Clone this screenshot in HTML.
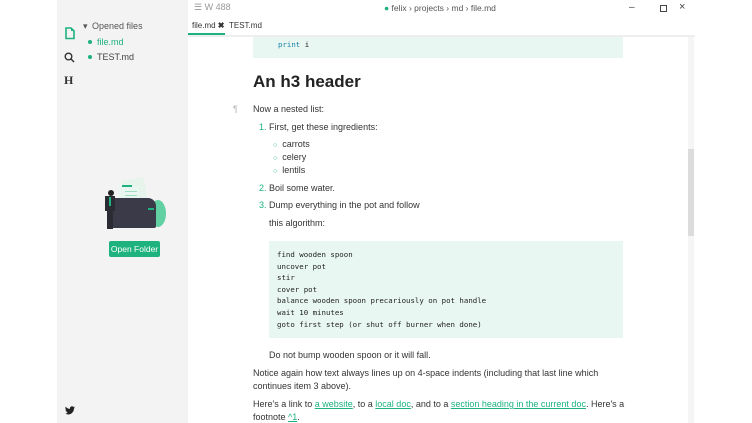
<!DOCTYPE html>
<html><head><meta charset="utf-8"><style>
*{margin:0;padding:0;box-sizing:border-box}
body{width:752px;height:423px;background:#fff;position:relative;overflow:hidden;font-family:"Liberation Sans",sans-serif;color:#333}
.a{position:absolute}
#side{left:57px;top:0;width:131px;height:423px;background:#f3f3f3}
#main{left:188px;top:0;width:507px;height:423px;background:#fff}
.t{font-size:9px;white-space:nowrap}
.p{position:absolute;font-size:9px;line-height:12px;white-space:nowrap;color:#333}
.g{color:#1db27e}
.lnk{color:#1db27e;text-decoration:underline}
.mono{font-family:"DejaVu Sans Mono","Liberation Mono",monospace;font-size:7.4px;line-height:11.6px;color:#222;white-space:pre}
</style></head><body>
<div id="side" class="a">
  <svg class="a" style="left:7px;top:27px" width="12" height="13" viewBox="0 0 12 13"><path d="M2 1h5l3 3v7.5H2z" fill="none" stroke="#1db27e" stroke-width="1.6"/><path d="M7 1v3h3" fill="#1db27e"/></svg>
  <svg class="a" style="left:7px;top:52px" width="11" height="11" viewBox="0 0 11 11"><circle cx="4.5" cy="4.5" r="3.3" fill="none" stroke="#333" stroke-width="1.4"/><path d="M7 7l3 3" stroke="#333" stroke-width="1.5"/></svg>
  <div class="a" style="left:7px;top:73px;font-family:'Liberation Serif',serif;font-weight:bold;font-size:12px;color:#333">H</div>
  <div class="a t" style="left:26px;top:21px;color:#555">▾ <span style="margin-left:2px">Opened files</span></div>
  <div class="a" style="left:31px;top:40px;width:4px;height:4px;border-radius:50%;background:#1db27e"></div>
  <div class="a t g" style="left:40px;top:37px">file.md</div>
  <div class="a" style="left:31px;top:55px;width:4px;height:4px;border-radius:50%;background:#1db27e"></div>
  <div class="a t" style="left:40px;top:52px;color:#444">TEST.md</div>
  <div class="a" style="left:67px;top:179px;width:22px;height:26px;background:#e6f4ec;transform:rotate(-10deg)"></div>
  <div class="a" style="left:62px;top:186px;width:20px;height:20px;background:#eaf6f0"></div>
  <div class="a" style="left:65px;top:185px;width:10px;height:1.5px;background:#1db27e"></div>
  <div class="a" style="left:68px;top:191px;width:12px;height:1px;background:#9fdcbf"></div>
  <div class="a" style="left:68px;top:195px;width:12px;height:1px;background:#9fdcbf"></div>
  <div class="a" style="left:93px;top:200px;width:16px;height:27px;border-radius:50%;background:#3cc78d;opacity:.8"></div>
  <div class="a" style="left:55px;top:198px;width:44px;height:30px;background:#3a3a48;border-radius:3px 8px 2px 2px"></div>
  <div class="a" style="left:91px;top:208px;width:6px;height:2px;background:#1db27e"></div>
  <div class="a" style="left:51px;top:190px;width:6px;height:6px;border-radius:50%;background:#222"></div>
  <div class="a" style="left:48px;top:196px;width:10px;height:15px;background:#2b2b33"></div>
  <div class="a" style="left:52px;top:197px;width:2px;height:9px;background:#1db27e"></div>
  <div class="a" style="left:50px;top:210px;width:6px;height:19px;background:#2b2b33"></div>
  <div class="a" style="left:52px;top:241px;width:51px;height:16px;background:#1db27e;border-radius:2px;color:#fff;font-size:8.5px;text-align:center;line-height:16px">Open Folder</div>
  <svg class="a" style="left:8px;top:406px" width="10" height="9" viewBox="0 0 24 20"><path d="M24 2.4a10 10 0 0 1-2.8.8A5 5 0 0 0 23.3.4a10 10 0 0 1-3.1 1.2A4.9 4.9 0 0 0 11.8 6 14 14 0 0 1 1.7.9a4.9 4.9 0 0 0 1.5 6.6A4.9 4.9 0 0 1 1 6.9a4.9 4.9 0 0 0 3.9 4.8 5 5 0 0 1-2.2.1 4.9 4.9 0 0 0 4.6 3.4A9.9 9.9 0 0 1 0 17.3 14 14 0 0 0 7.5 19.5c9 0 14-7.5 14-14v-.6A10 10 0 0 0 24 2.4z" fill="#222"/></svg>
</div>
<div id="main" class="a">
  <div class="a t" style="left:6px;top:2px;color:#999;font-size:9px">☰ W 488</div>
  <div class="a t" style="left:196px;top:3px;color:#555;font-size:8.5px"><span class="g">●</span> felix › projects › md › file.md</div>
  <div class="a t" style="left:441px;top:2px;color:#444;font-size:10px">–</div>
  <div class="a" style="left:472px;top:5px;width:7px;height:7px;border:1px solid #444"></div>
  <div class="a t" style="left:491px;top:1px;color:#444;font-size:11px">×</div>
  <div class="a t" style="left:4px;top:21px;color:#333;font-size:8px">file.md <b>✖</b></div>
  <div class="a" style="left:0;top:33px;width:37px;height:2px;background:#1db27e"></div>
  <div class="a t" style="left:41px;top:21px;color:#333;font-size:8px">TEST.md</div>
  <div class="a" style="left:65px;top:36px;width:370px;height:22px;background:#e8f7f1"></div>
  <div class="a" style="left:0;top:35px;width:507px;height:2px;background:#eee"></div>
  <div class="a mono" style="left:90px;top:39px;color:#1a7fa8">print <span style="color:#222">i</span></div>
  <div class="a" style="left:65px;top:72px;font-size:17px;font-weight:bold;color:#222">An h3 header</div>
  <div class="p" style="left:45px;top:103px;color:#bbb">¶</div>
  <div class="p" style="left:65px;top:103px">Now a nested list:</div>
  <div class="p" style="left:71px;top:121px"><span class="g">1.</span> First, get these ingredients:</div>
  <div class="p" style="left:85px;top:138px"><span class="g" style="font-size:7px">○</span>&nbsp; carrots</div>
  <div class="p" style="left:85px;top:151px"><span class="g" style="font-size:7px">○</span>&nbsp; celery</div>
  <div class="p" style="left:85px;top:164px"><span class="g" style="font-size:7px">○</span>&nbsp; lentils</div>
  <div class="p" style="left:71px;top:182px"><span class="g">2.</span> Boil some water.</div>
  <div class="p" style="left:71px;top:199px"><span class="g">3.</span> Dump everything in the pot and follow</div>
  <div class="p" style="left:81px;top:217px">this algorithm:</div>
  <div class="a" style="left:81px;top:241px;width:354px;height:97px;background:#e8f7f1"></div>
  <div class="a mono" style="left:89px;top:249px">find wooden spoon
uncover pot
stir
cover pot
balance wooden spoon precariously on pot handle
wait 10 minutes
goto first step (or shut off burner when done)</div>
  <div class="p" style="left:81px;top:349px">Do not bump wooden spoon or it will fall.</div>
  <div class="p" style="left:65px;top:367px">Notice again how text always lines up on 4-space indents (including that last line which</div>
  <div class="p" style="left:65px;top:380px">continues item 3 above).</div>
  <div class="p" style="left:65px;top:398px">Here's a link to <span class="lnk">a website</span>, to a <span class="lnk">local doc</span>, and to a <span class="lnk">section heading in the current doc</span>. Here's a</div>
  <div class="p" style="left:65px;top:411px">footnote <span class="lnk">^1</span>.</div>
  <div class="a" style="left:500px;top:37px;width:6px;height:386px;background:#f5f5f5"></div>
  <div class="a" style="left:500px;top:149px;width:6px;height:87px;background:#dcdcdc"></div>
</div>
</body></html>
